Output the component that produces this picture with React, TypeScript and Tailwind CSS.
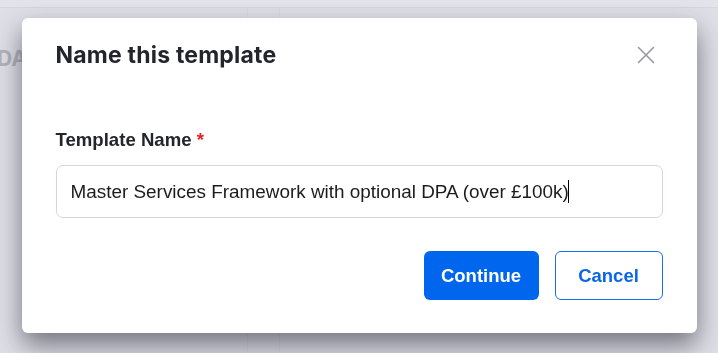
import { useState } from 'react';

export default function App() {
  const [name, setName] = useState('Master Services Framework with optional DPA (over £100k)');

  return (
    <main className="relative min-h-[353px] h-screen w-full overflow-hidden bg-[#dfdfe7]">
      {/* Page behind the overlay */}
      <div className="h-[8px] border-b border-[#d6d6df] bg-[#e3e3ea]" />
      <div className="flex">
        <div className="w-[250px] pt-[37px] text-[21px] font-bold text-[#b3b3bb] [font-family:Inter,'Noto_Sans',sans-serif] leading-7 -ml-[3px]">
          DA
        </div>
        <div className="h-[345px] w-[33px] border-x border-[#d8d8e0]" />
      </div>

      {/* Modal */}
      <div className="fixed inset-0 flex items-start justify-center pt-[18px]">
        <div className="flex h-[315px] w-[675px] flex-col rounded-[6px] bg-white px-[34px] pt-[21px] pb-[33px] shadow-[0_12px_26px_rgba(30,30,45,0.55)]">
          <div className="flex items-center justify-between">
            <h2 className="text-[23px] leading-8 font-bold tracking-[0.2px] text-[#24242c] [font-family:Inter,'Noto_Sans',sans-serif]">
              Name this template
            </h2>
            <button className="mr-[5px] flex h-6 w-6 items-center justify-center text-[#9896a6]">
              <svg width="18" height="18" viewBox="0 0 18 18" fill="none" stroke="currentColor" strokeWidth="1.6" strokeLinecap="round">
                <path d="M1.5 1.5l15 15M16.5 1.5l-15 15" />
              </svg>
            </button>
          </div>

          <label className="mt-[57px] block text-[18.6px] leading-6 font-bold text-[#24242c] [font-family:'Liberation_Sans',Arial,sans-serif]">
            Template Name <span className="text-[#e8202a]">*</span>
          </label>
          <div className="relative mt-[13px]">
            <input
              type="text"
              value={name}
              onChange={(e) => setName(e.target.value)}
              className="h-[53px] w-full rounded-[7px] border border-[#d6d4e2] px-[14px] text-[18.9px] text-[#1c1c20] outline-none [font-family:'Liberation_Sans',Arial,sans-serif] caret-black"
            />
            {/* text caret */}
            <span className="pointer-events-none absolute left-[512px] top-[15px] h-[23px] w-px bg-black" />
          </div>

          <div className="mt-[33px] flex justify-end gap-4">
            <button className="h-[49px] w-[115px] rounded-[6px] bg-[#0066ee] text-[18.5px] font-bold text-white [font-family:'Liberation_Sans',Arial,sans-serif]">
              Continue
            </button>
            <button className="h-[49px] w-[108px] rounded-[6px] border border-[#1a6fe8] bg-white text-[18.5px] font-bold text-[#0a66e6] [font-family:'Liberation_Sans',Arial,sans-serif]">
              Cancel
            </button>
          </div>
        </div>
      </div>
    </main>
  );
}
